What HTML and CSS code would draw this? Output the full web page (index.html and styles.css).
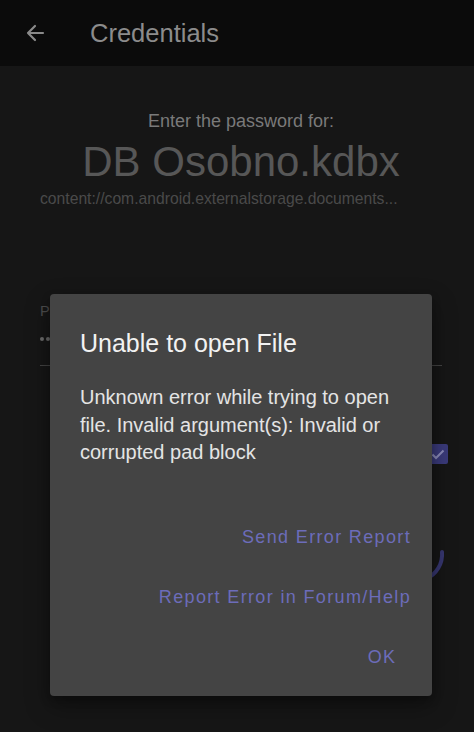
FILE: index.html
```html
<!DOCTYPE html>
<html lang="en">
<head>
<meta charset="utf-8">
<title>Credentials</title>
<link rel="stylesheet" href="styles.css">
</head>
<body>
<div class="screen">
  <header class="appbar">
    <svg class="back" width="24" height="24" viewBox="0 0 24 24"><path d="M20 12H5M12 5l-7 7 7 7" fill="none" stroke="currentColor" stroke-width="2.2" stroke-linecap="round" stroke-linejoin="round"/></svg>
    <h1 class="appbar-title">Credentials</h1>
  </header>
  <main class="content">
    <p class="prompt">Enter the password for:</p>
    <p class="dbname">DB Osobno.kdbx</p>
    <p class="uri">content://com.android.externalstorage.documents...</p>
    <div class="field">
      <span class="field-label">Password</span>
      <div class="dots"><span></span><span></span><span></span><span></span><span></span><span></span><span></span><span></span></div>
    </div>
    <div class="check-row">
      <span class="checkbox">
        <svg width="20" height="20" viewBox="0 0 20 20"><path d="M4.5 10.5l3.5 3.5 7.5-7.5" fill="none" stroke="#8a8ab8" stroke-width="2"/></svg>
      </span>
    </div>
    <div class="spinner-row">
      <svg class="spinner" width="60" height="60" viewBox="0 0 60 60"><path d="M56 26 A27 27 0 0 1 40 53" fill="none" stroke="#36366f" stroke-width="4" stroke-linecap="round"/></svg>
    </div>
  </main>
  <div class="scrim">
    <div class="dialog">
      <h2 class="dialog-title">Unable to open File</h2>
      <p class="dialog-body">Unknown error while trying to open file. Invalid argument(s): Invalid or corrupted pad block</p>
      <div class="actions">
        <button class="btn">Send Error Report</button>
        <button class="btn">Report Error in Forum/Help</button>
        <button class="btn btn-ok">OK</button>
      </div>
    </div>
  </div>
</div>
</body>
</html>
```
FILE: styles.css
```css
* { box-sizing: border-box; }
html, body {
  margin: 0;
  padding: 0;
  background: #161616;
  font-family: "Liberation Sans", Arial, sans-serif;
}
.screen {
  position: relative;
  width: 474px;
  height: 732px;
  overflow: hidden;
  background: #161616;
}
.appbar {
  height: 66px;
  background: #0b0b0b;
  display: flex;
  align-items: center;
  padding-left: 23px;
  gap: 43px;
}
.back {
  color: #8a8a8a;
  display: block;
}
.appbar-title {
  margin: 0;
  font-weight: normal;
  font-size: 25.5px;
  line-height: 30px;
  color: #8c8c8c;
}
.content {
  padding: 44px 32px 0 40px;
  display: flex;
  flex-direction: column;
}
.prompt {
  margin: 0;
  text-align: center;
  font-size: 18px;
  line-height: 22px;
  color: #7a7a7a;
}
.dbname {
  margin: 6px 0 0;
  text-align: center;
  font-size: 42px;
  line-height: 48px;
  color: #575757;
}
.uri {
  margin: 4px 0 0;
  font-size: 15.7px;
  line-height: 18px;
  color: #4a4a4a;
  white-space: nowrap;
}
.field {
  margin-top: 94px;
  border-bottom: 1px solid #424242;
  padding-bottom: 24px;
}
.field-label {
  display: block;
  font-size: 14.5px;
  line-height: 18px;
  color: #4c4c4c;
}
.dots {
  display: flex;
  gap: 2px;
  margin-top: 17px;
}
.dots span {
  width: 4px;
  height: 4px;
  border-radius: 50%;
  background: #6a6a6a;
}
.check-row {
  display: flex;
  justify-content: flex-end;
  margin-top: 78px;
  margin-right: -6px;
}
.checkbox {
  width: 20px;
  height: 20px;
  background: #3a3a7a;
  border-radius: 2px;
  display: block;
}
.checkbox svg { display: block; }
.spinner-row {
  display: flex;
  justify-content: flex-end;
  margin-top: 62px;
  margin-right: -4px;
}
.spinner { display: block; }
.scrim {
  position: absolute;
  inset: 0;
}
.dialog {
  position: absolute;
  left: 50px;
  top: 294px;
  width: 382px;
  height: 402px;
  background: #444444;
  border-radius: 4px;
  box-shadow: 0 10px 24px rgba(0,0,0,0.35), 0 4px 8px rgba(0,0,0,0.25);
  padding: 34px 0 0 30px;
  display: flex;
  flex-direction: column;
}
.dialog-title {
  margin: 0;
  font-weight: normal;
  font-size: 25px;
  line-height: 30px;
  color: #f2f2f2;
}
.dialog-body {
  margin: 26px 24px 0 0;
  font-size: 20px;
  line-height: 27.5px;
  color: #e4e4e4;
}
.actions {
  margin-top: 40px;
  display: flex;
  flex-direction: column;
  align-items: flex-end;
  padding-right: 13px;
}
.btn {
  height: 60px;
  padding: 0 8px;
  border: 0;
  background: transparent;
  font-family: "Liberation Sans", Arial, sans-serif;
  font-size: 18px;
  line-height: 20px;
  letter-spacing: 1.35px;
  color: #6c6cba;
  display: flex;
  align-items: center;
  justify-content: center;
}
.btn-ok { min-width: 74px; }
```
